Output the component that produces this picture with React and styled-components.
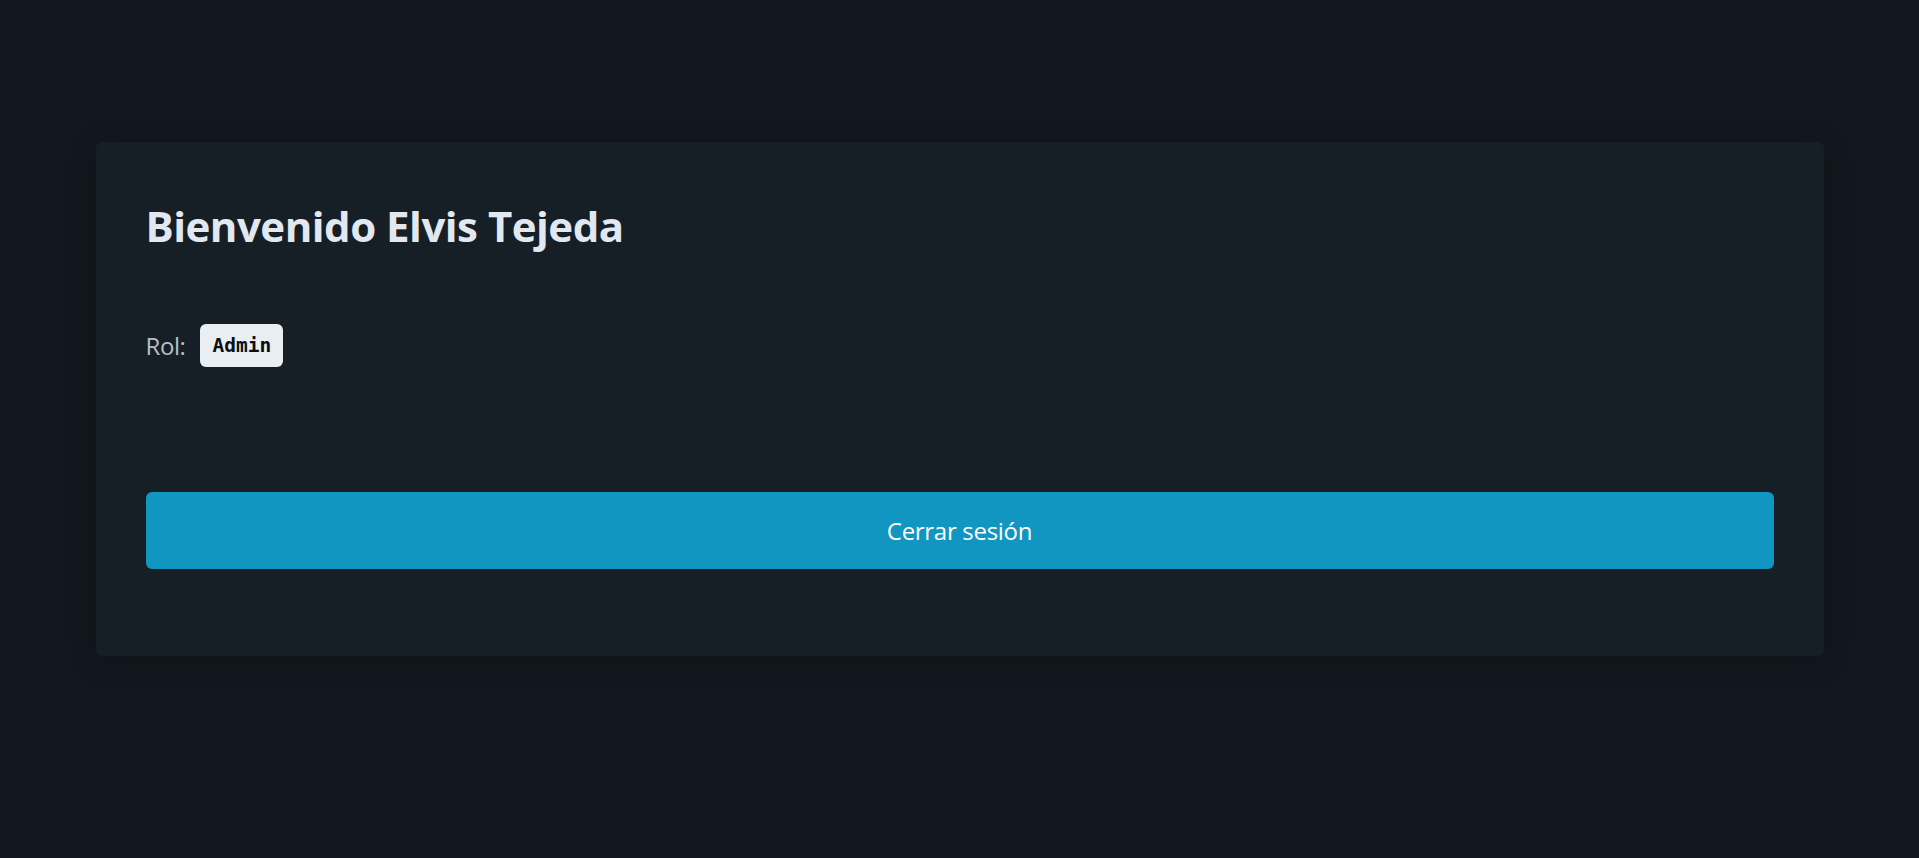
import React from "react";
import styled, { createGlobalStyle } from "styled-components";

const Global = createGlobalStyle`
  html, body {
    margin: 0;
    padding: 0;
    background: #12181f;
    min-height: 100%;
  }
  body {
    font-family: "Open Sans", "Noto Sans", sans-serif;
  }
`;

const Page = styled.main`
  min-height: 858px;
  background: #12181f;
  padding-top: 142px;
  box-sizing: border-box;
`;

const Card = styled.section`
  width: 1728px;
  margin: 0 auto;
  box-sizing: border-box;
  padding: 50px 50px 87px;
  background: #161f26;
  border-radius: 6px;
  box-shadow: 0 4px 30px rgba(0, 0, 0, 0.25);
`;

const Title = styled.h1`
  margin: 0;
  padding-top: 7px;
  font-size: 42px;
  line-height: 54px;
  font-weight: 700;
  color: #e2e8f0;
  letter-spacing: -0.5px;
`;

const RoleRow = styled.div`
  display: flex;
  align-items: center;
  gap: 14px;
  margin-top: 71px;
`;

const RoleLabel = styled.span`
  font-size: 24px;
  color: #b3c0c9;
  letter-spacing: -0.4px;
`;

const Badge = styled.code`
  display: inline-flex;
  align-items: center;
  height: 43px;
  box-sizing: border-box;
  padding: 0 12px 0 13px;
  border-radius: 6px;
  background: #e9eef2;
  color: #0b0f14;
  font-family: "DejaVu Sans Mono", "Liberation Mono", monospace;
  font-size: 19.5px;
  font-weight: 600;
`;

const LogoutButton = styled.button`
  display: block;
  width: 100%;
  height: 77px;
  margin-top: 125px;
  border: none;
  border-radius: 6px;
  background: #1195c1;
  color: #ffffff;
  font-family: "Open Sans", "Noto Sans", sans-serif;
  font-size: 24px;
  letter-spacing: -0.3px;
  cursor: pointer;
`;

export default function App() {
  return (
    <>
      <Global />
      <Page>
        <Card>
          <Title>Bienvenido Elvis Tejeda</Title>
          <RoleRow>
            <RoleLabel>Rol:</RoleLabel>
            <Badge>Admin</Badge>
          </RoleRow>
          <LogoutButton type="button">Cerrar sesión</LogoutButton>
        </Card>
      </Page>
    </>
  );
}
